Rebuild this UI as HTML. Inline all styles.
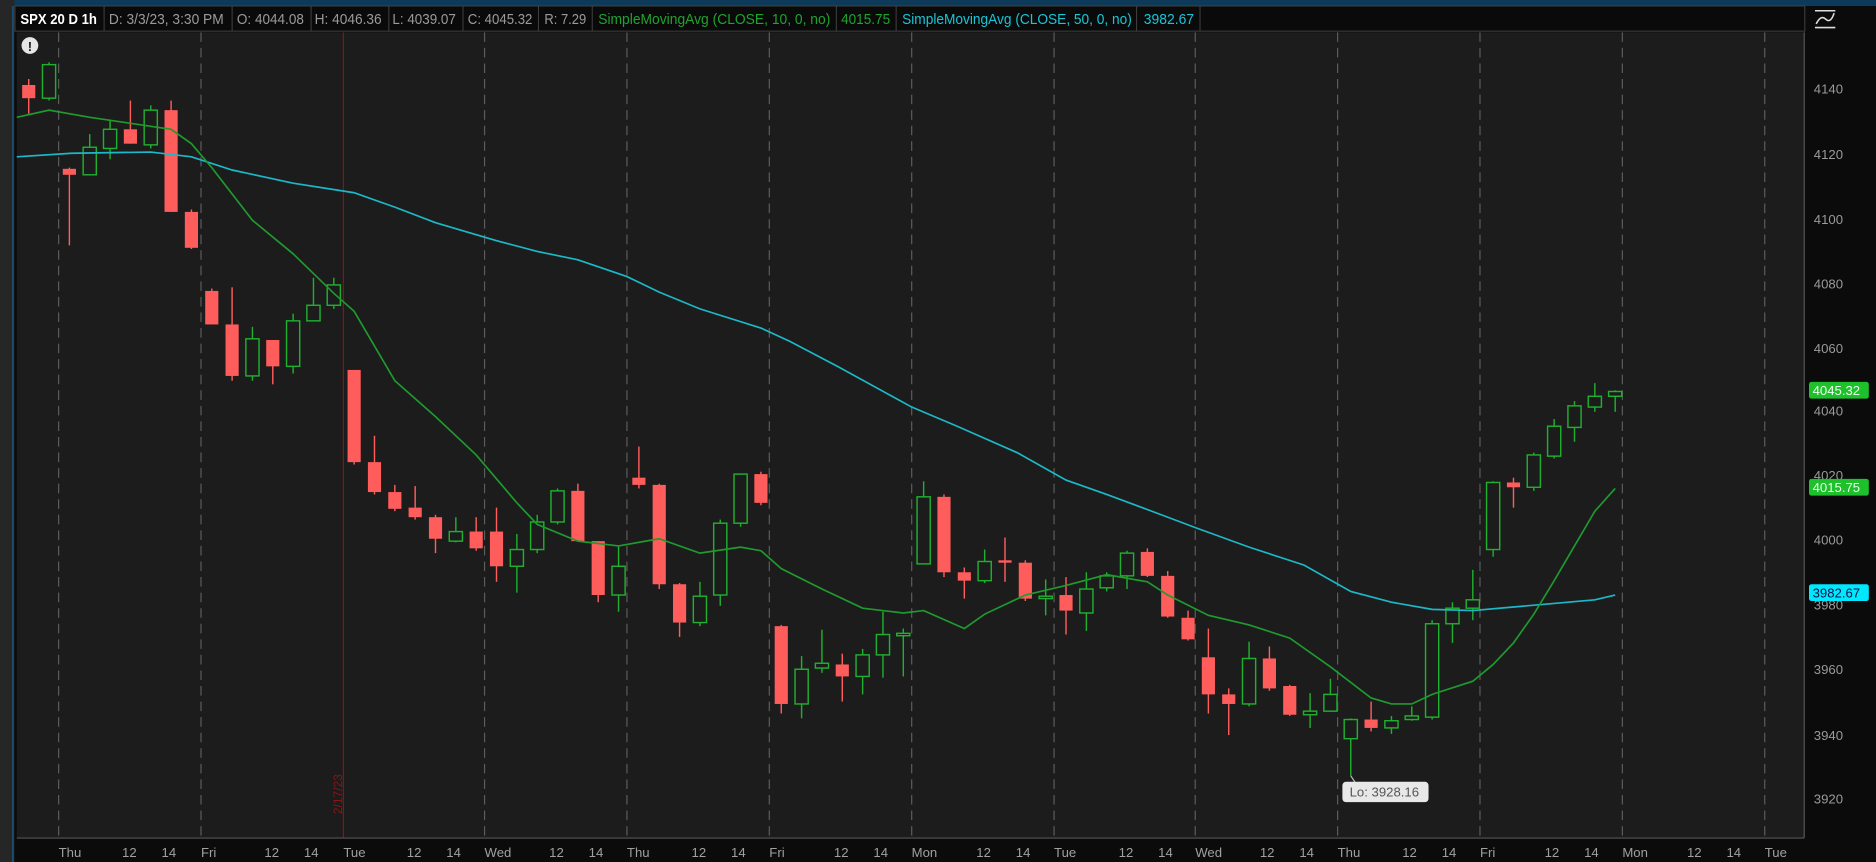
<!DOCTYPE html>
<html><head><meta charset="utf-8"><style>
html,body{margin:0;padding:0;background:#0b0b0b;width:1876px;height:862px;overflow:hidden}
svg{display:block}
text{font-family:"Liberation Sans","DejaVu Sans",sans-serif}
</style></head><body>
<svg id="s" width="1876" height="862" viewBox="0 0 1568 720" preserveAspectRatio="none" xmlns="http://www.w3.org/2000/svg">
<rect x="0" y="0" width="1568" height="720" fill="#0b0b0b"/>
<rect x="0" y="0" width="1568" height="5" fill="#0e3a5a"/>
<rect x="0" y="0" width="12" height="720" fill="#262626"/>
<rect x="10" y="5" width="1.5" height="715" fill="#1d4d70"/>
<!-- header -->
<rect x="12.5" y="5" width="1496" height="21" fill="#0a0a0a" stroke="#444" stroke-width="0.8"/>
<g stroke="#444" stroke-width="0.8">
<line x1="87" y1="5" x2="87" y2="26"/><line x1="194" y1="5" x2="194" y2="26"/><line x1="260" y1="5" x2="260" y2="26"/>
<line x1="325" y1="5" x2="325" y2="26"/><line x1="387" y1="5" x2="387" y2="26"/><line x1="450" y1="5" x2="450" y2="26"/>
<line x1="495" y1="5" x2="495" y2="26"/><line x1="699" y1="5" x2="699" y2="26"/><line x1="749" y1="5" x2="749" y2="26"/>
<line x1="950" y1="5" x2="950" y2="26"/><line x1="1003" y1="5" x2="1003" y2="26"/>
</g>
<g font-size="12" fill="#9a9a9a" lengthAdjust="spacingAndGlyphs">
<text x="17" y="20" fill="#fff" font-weight="bold" textLength="64" lengthAdjust="spacingAndGlyphs">SPX 20 D 1h</text>
<text x="91" y="20" textLength="96" lengthAdjust="spacingAndGlyphs">D: 3/3/23, 3:30 PM</text>
<text x="198" y="20" textLength="56" lengthAdjust="spacingAndGlyphs">O: 4044.08</text>
<text x="263" y="20" textLength="56" lengthAdjust="spacingAndGlyphs">H: 4046.36</text>
<text x="328" y="20" textLength="53" lengthAdjust="spacingAndGlyphs">L: 4039.07</text>
<text x="391" y="20" textLength="54" lengthAdjust="spacingAndGlyphs">C: 4045.32</text>
<text x="455" y="20" textLength="35" lengthAdjust="spacingAndGlyphs">R: 7.29</text>
<text x="500" y="20" fill="#1fa32f" textLength="194" lengthAdjust="spacingAndGlyphs">SimpleMovingAvg (CLOSE, 10, 0, no)</text>
<text x="703" y="20" fill="#1fa32f" textLength="41" lengthAdjust="spacingAndGlyphs">4015.75</text>
<text x="754" y="20" fill="#18c6d8" textLength="192" lengthAdjust="spacingAndGlyphs">SimpleMovingAvg (CLOSE, 50, 0, no)</text>
<text x="956" y="20" fill="#18c6d8" textLength="42" lengthAdjust="spacingAndGlyphs">3982.67</text>
</g>
<!-- chart -->
<rect x="14" y="27" width="1494" height="673" fill="#1c1c1c"/>
<g stroke="#5c5c5c" stroke-width="1" stroke-dasharray="8,5">
<line x1="49" y1="27" x2="49" y2="700"/><line x1="168" y1="27" x2="168" y2="700"/>
<line x1="405" y1="27" x2="405" y2="700"/><line x1="524" y1="27" x2="524" y2="700"/><line x1="643" y1="27" x2="643" y2="700"/>
<line x1="762" y1="27" x2="762" y2="700"/><line x1="881" y1="27" x2="881" y2="700"/><line x1="999" y1="27" x2="999" y2="700"/>
<line x1="1118" y1="27" x2="1118" y2="700"/><line x1="1237" y1="27" x2="1237" y2="700"/><line x1="1356" y1="27" x2="1356" y2="700"/>
<line x1="1475" y1="27" x2="1475" y2="700"/>
</g>
<line x1="287" y1="27" x2="287" y2="700" stroke="#8a1515" stroke-width="1"/>
<text transform="translate(286,680) rotate(-90)" font-size="10" fill="#8a1515">2/17/23</text>
<line x1="14" y1="700" x2="1508" y2="700" stroke="#555" stroke-width="1"/>
<line x1="1508" y1="27" x2="1508" y2="700" stroke="#555" stroke-width="1"/>
<circle cx="25" cy="38" r="7" fill="#e6e6e6"/>
<text x="25" y="42.5" font-size="11" font-weight="bold" fill="#1c1c1c" text-anchor="middle">!</text>
<g id="c"></g>
<polyline fill="none" stroke="#1cb8c8" stroke-width="1.4" points="14,131 60,128 126,127 160,131 194,142 245,153 296,161 330,173 364,186 415,201 449,210 483,217 524,231 551,244 585,258 636,274 660,285 700,306 762,340 800,356 850,378 891,401 925,413 960,426 1000,441 1044,457 1090,472 1129,494 1163,503 1197,509 1231,510 1265,507 1299,504 1333,501 1350,497"/>
<polyline fill="none" stroke="#1f9a2e" stroke-width="1.4" points="14,98 41,92 75,98 109,103 143,108 160,120 177,140 211,184 245,212 279,245 296,260 330,318 364,348 398,380 432,420 449,438 483,452 517,456 551,450 585,462 619,457 636,460 653,475 687,492 721,508 755,512 772,510 806,525 823,513 857,497 891,489 925,480 959,486 976,497 1010,514 1044,522 1078,533 1112,557 1146,583 1163,588 1180,588 1197,580 1231,569 1248,555 1265,537 1282,513 1299,485 1316,456 1333,427 1350,408"/>
<!-- Lo label -->
<polyline points="1129,648 1133,654" stroke="#bbb" fill="none"/>
<rect x="1122" y="653" width="72" height="17" rx="3" fill="#e8e8e8"/>
<text x="1128" y="665.5" font-size="11" fill="#555">Lo: 3928.16</text>
<!-- price axis -->
<g font-size="11" fill="#9a9a9a">
<text x="1516" y="78">4140</text><text x="1516" y="133">4120</text><text x="1516" y="187">4100</text>
<text x="1516" y="241">4080</text><text x="1516" y="295">4060</text><text x="1516" y="347">4040</text>
<text x="1516" y="401">4020</text><text x="1516" y="455">4000</text><text x="1516" y="509">3980</text>
<text x="1516" y="563">3960</text><text x="1516" y="618">3940</text><text x="1516" y="671">3920</text>
</g>
<rect x="1512" y="319" width="50" height="14" rx="2" fill="#1ec02c"/>
<text x="1515" y="330" font-size="11" fill="#eaffea">4045.32</text>
<rect x="1512" y="400" width="50" height="14" rx="2" fill="#1ec02c"/>
<text x="1515" y="411" font-size="11" fill="#eaffea">4015.75</text>
<rect x="1512" y="488" width="50" height="14" rx="2" fill="#00e8ff"/>
<text x="1515" y="499" font-size="11" fill="#114">3982.67</text>
<g stroke="#ddd" stroke-width="1.3" fill="none">
<line x1="1517" y1="9" x2="1534" y2="9"/><line x1="1517" y1="23" x2="1534" y2="23"/>
<path d="M1518 20 Q1522 12 1526 16 Q1530 20 1533 11"/>
</g>
<!-- time axis -->
<g font-size="11" fill="#a0a0a0">
<text x="49" y="716">Thu</text><text x="102" y="716">12</text><text x="135" y="716">14</text>
<text x="168" y="716">Fri</text><text x="221" y="716">12</text><text x="254" y="716">14</text>
<text x="287" y="716">Tue</text><text x="340" y="716">12</text><text x="373" y="716">14</text>
<text x="405" y="716">Wed</text><text x="459" y="716">12</text><text x="492" y="716">14</text>
<text x="524" y="716">Thu</text><text x="578" y="716">12</text><text x="611" y="716">14</text>
<text x="643" y="716">Fri</text><text x="697" y="716">12</text><text x="730" y="716">14</text>
<text x="762" y="716">Mon</text><text x="816" y="716">12</text><text x="849" y="716">14</text>
<text x="881" y="716">Tue</text><text x="935" y="716">12</text><text x="968" y="716">14</text>
<text x="999" y="716">Wed</text><text x="1053" y="716">12</text><text x="1086" y="716">14</text>
<text x="1118" y="716">Thu</text><text x="1172" y="716">12</text><text x="1205" y="716">14</text>
<text x="1237" y="716">Fri</text><text x="1291" y="716">12</text><text x="1324" y="716">14</text>
<text x="1356" y="716">Mon</text><text x="1410" y="716">12</text><text x="1443" y="716">14</text>
<text x="1475" y="716">Tue</text>
</g>
</svg>
<script>
var d="R 24 66 95 71 82|G 41 52 84 54 82|R 58 140 205 141 146|G 75 112 146 123 146|G 92 100 133 108 124|R 109 84 120 108 120|G 126 88 124 92 121|R 143 84 177 92 177|R 160 175 208 177 207|R 177 241 271 243 271|R 194 240 318 271 314|G 211 273 318 283 314|R 228 284 321 284 306|G 245 262 312 268 306|G 262 232 268 255 268|G 279 232 258 238 255|R 296 309 388 309 386|R 313 364 413 386 411|R 330 405 427 411 425|R 347 406 434 424 432|R 364 430 462 432 450|G 381 432 453 444 452|R 398 432 460 444 458|R 415 424 486 444 473|G 432 446 495 459 473|G 449 430 462 436 459|G 466 408 438 410 436|R 483 404 452 410 452|R 500 452 503 452 497|G 517 456 511 473 497|R 534 373 408 399 405|R 551 404 492 405 488|R 568 487 532 488 520|G 585 486 523 498 520|G 602 434 506 437 497|G 619 396 440 396 437|R 636 394 422 396 420|R 653 522 596 523 588|G 670 548 600 559 588|G 687 526 562 554 558|R 704 546 586 555 565|G 721 542 580 547 565|G 738 511 566 530 547|G 755 525 565 529 531|G 772 402 471 415 471|R 789 413 482 415 478|R 806 474 500 478 485|G 823 459 487 469 485|R 840 449 486 468 470|R 857 468 502 470 500|G 874 484 514 498 500|R 891 482 530 497 510|G 908 478 527 492 512|G 925 478 494 481 491|G 942 460 492 462 481|R 959 458 482 461 481|R 976 477 516 481 515|R 993 510 535 516 534|R 1010 525 596 549 580|R 1027 575 614 580 588|G 1044 536 590 550 588|R 1061 540 577 550 575|R 1078 572 598 573 597|G 1095 579 608 594 597|G 1112 567 594 580 594|G 1129 600 648 601 617|R 1146 586 611 601 608|G 1163 598 613 602 608|G 1180 590 602 598 601|G 1197 518 601 521 599|G 1214 503 537 508 521|G 1231 476 518 501 508|G 1248 402 465 403 459|R 1265 399 424 403 407|G 1282 378 410 380 407|G 1299 350 383 356 381|G 1316 335 369 339 357|G 1333 320 344 331 340|G 1350 326 344 327 331";
var h="";d.split("|").forEach(function(s){var a=s.split(" "),t=a[0],x=+a[1],wt=+a[2],wb=+a[3],bt=+a[4],bb=+a[5];var c=t=="R"?"#ff5c5c":"#1fb02f";var bh=Math.max(bb-bt,1.5);
h+='<line x1="'+x+'" y1="'+wt+'" x2="'+x+'" y2="'+wb+'" stroke="'+c+'" stroke-width="1.2"/>';
if(t=="R")h+='<rect x="'+(x-5.5)+'" y="'+bt+'" width="11" height="'+bh+'" fill="'+c+'"/>';
else h+='<rect x="'+(x-5.5)+'" y="'+bt+'" width="11" height="'+bh+'" fill="#1c1c1c" stroke="'+c+'" stroke-width="1.2"/>';});
document.getElementById("c").innerHTML=h;
</script>
</body></html>
